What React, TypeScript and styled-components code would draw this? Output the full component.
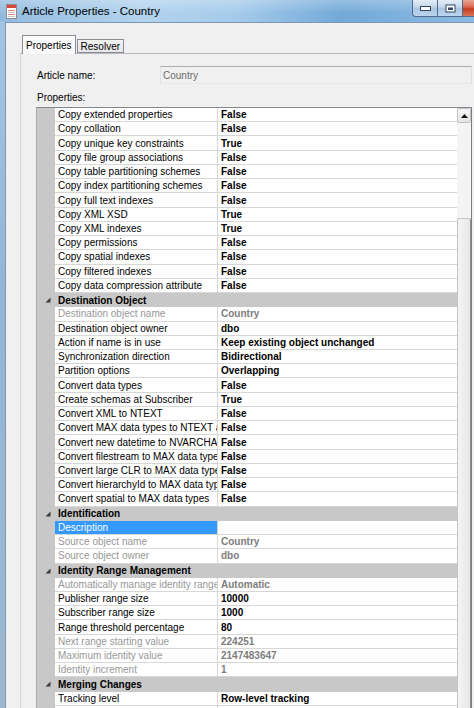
import styled, { createGlobalStyle } from "styled-components";

type GridRow =
  | { kind: "category"; label: string }
  | { kind: "prop"; label: string; value: string; readOnly?: boolean; selected?: boolean };

const prop = (
  label: string,
  value = "",
  extra: { readOnly?: boolean; selected?: boolean } = {}
): GridRow => ({ kind: "prop", label, value, ...extra });
const cat = (label: string): GridRow => ({ kind: "category", label });

const rows: GridRow[] = [
  prop("Copy extended properties", "False"),
  prop("Copy collation", "False"),
  prop("Copy unique key constraints", "True"),
  prop("Copy file group associations", "False"),
  prop("Copy table partitioning schemes", "False"),
  prop("Copy index partitioning schemes", "False"),
  prop("Copy full text indexes", "False"),
  prop("Copy XML XSD", "True"),
  prop("Copy XML indexes", "True"),
  prop("Copy permissions", "False"),
  prop("Copy spatial indexes", "False"),
  prop("Copy filtered indexes", "False"),
  prop("Copy data compression attribute", "False"),
  cat("Destination Object"),
  prop("Destination object name", "Country", { readOnly: true }),
  prop("Destination object owner", "dbo"),
  prop("Action if name is in use", "Keep existing object unchanged"),
  prop("Synchronization direction", "Bidirectional"),
  prop("Partition options", "Overlapping"),
  prop("Convert data types", "False"),
  prop("Create schemas at Subscriber", "True"),
  prop("Convert XML to NTEXT", "False"),
  prop("Convert MAX data types to NTEXT and IMAGE", "False"),
  prop("Convert new datetime to NVARCHAR", "False"),
  prop("Convert filestream to MAX data types", "False"),
  prop("Convert large CLR to MAX data types", "False"),
  prop("Convert hierarchyId to MAX data types", "False"),
  prop("Convert spatial to MAX data types", "False"),
  cat("Identification"),
  prop("Description", "", { selected: true }),
  prop("Source object name", "Country", { readOnly: true }),
  prop("Source object owner", "dbo", { readOnly: true }),
  cat("Identity Range Management"),
  prop("Automatically manage identity range", "Automatic", { readOnly: true }),
  prop("Publisher range size", "10000"),
  prop("Subscriber range size", "1000"),
  prop("Range threshold percentage", "80"),
  prop("Next range starting value", "224251", { readOnly: true }),
  prop("Maximum identity value", "2147483647", { readOnly: true }),
  prop("Identity increment", "1", { readOnly: true }),
  cat("Merging Changes"),
  prop("Tracking level", "Row-level tracking"),
  prop("", ""),
];

const LINE = "#d7d7d7";
const GUTTER = "#c8c8c8";

const GlobalStyle = createGlobalStyle`
  html, body {
    margin: 0;
    padding: 0;
    overflow: hidden;
    background: #f0f0f0;
  }
  body {
    font-family: "Liberation Sans", Arial, sans-serif;
  }
`;

const Window = styled.div`
  width: 474px;
  height: 708px;
  overflow: hidden;
  display: flex;
  flex-direction: column;
  background: #9dbfe0;
`;

const TitleBar = styled.div`
  height: 22px;
  flex-shrink: 0;
  display: flex;
  align-items: center;
  padding-left: 6px;
  background:
    linear-gradient(to bottom, rgba(255, 255, 255, 0.25), rgba(255, 255, 255, 0) 60%),
    linear-gradient(to right, #93bbe0 0%, #b3d3ee 30%, #a5cbeb 50%, #73a9d8 72%, #8bbae2 100%);
`;

const Title = styled.span`
  margin-left: 5px;
  font-size: 11.5px;
  color: #000;
  white-space: nowrap;
`;

const CaptionGroup = styled.div`
  margin-left: auto;
  align-self: flex-start;
  width: 62px;
  display: flex;
  overflow: hidden;
  flex-shrink: 0;
`;

const CaptionButton = styled.div<{ $w: number; $close?: boolean; $first?: boolean }>`
  width: ${(p) => p.$w}px;
  height: 17px;
  flex-shrink: 0;
  box-sizing: border-box;
  border: 1px solid #4f6b8e;
  border-top: none;
  border-left: ${(p) => (p.$first ? "1px solid #4f6b8e" : "none")};
  border-bottom-left-radius: ${(p) => (p.$first ? "4px" : "0")};
  display: flex;
  align-items: center;
  justify-content: center;
  background: ${(p) =>
    p.$close
      ? "linear-gradient(to bottom, #e9a898 0%, #d8664b 45%, #c33d1f 55%, #d6735a 100%)"
      : "linear-gradient(to bottom, #e3edf7 0%, #c3d7eb 45%, #a9c4df 50%, #bcd5ee 100%)"};
`;

const Frame = styled.div`
  flex: 1;
  display: flex;
  min-height: 0;
`;

const FrameEdge = styled.div`
  width: 5px;
  flex-shrink: 0;
  background: linear-gradient(to bottom, #a3c5e5 0%, #92b6d8 40%, #9db8d2 100%);
`;

const Client = styled.div`
  flex: 1;
  display: flex;
  flex-direction: column;
  background: #f0f0f0;
  border-left: 1px solid #7f97b2;
  border-top: 1px solid #7f97b2;
  padding-top: 12px;
  min-width: 0;
`;

const TabStrip = styled.div`
  display: flex;
  align-items: flex-end;
  height: 18px;
  padding-left: 16px;
`;

const Tab = styled.div<{ $active?: boolean }>`
  position: relative;
  z-index: ${(p) => (p.$active ? 1 : 0)};
  box-sizing: border-box;
  height: ${(p) => (p.$active ? 19 : 14)}px;
  margin-bottom: ${(p) => (p.$active ? -1 : 0)}px;
  margin-left: ${(p) => (p.$active ? 0 : 1)}px;
  padding: 0 3px;
  border: 1px solid #898c95;
  border-bottom: ${(p) => (p.$active ? "none" : "1px solid #898c95")};
  background: ${(p) =>
    p.$active ? "#fafafa" : "linear-gradient(to bottom, #f3f3f3, #e6e6e6)"};
  font-size: 10px;
  color: #000;
  display: flex;
  align-items: center;
  white-space: nowrap;
`;

const Panel = styled.div`
  margin-left: 14px;
  border-top: 1px solid #b6b9c0;
  border-left: 1px solid #d3d5da;
  padding: 12px 0 0 16px;
  flex: 1;
  display: flex;
  flex-direction: column;
`;

const FieldRow = styled.div`
  display: flex;
  align-items: center;
  height: 18px;
`;

const FieldLabel = styled.span`
  width: 123px;
  font-size: 10px;
  color: #000;
`;

const TextBox = styled.div`
  width: 312px;
  height: 18px;
  box-sizing: border-box;
  border: 1px solid;
  border-color: #abadb3 #dbdfe6 #e3e9ef #e2e3ea;
  background: #f0f0f0;
  color: #6d6d6d;
  font-size: 10px;
  padding-left: 2px;
  display: flex;
  align-items: center;
`;

const SectionLabel = styled.div`
  margin-top: 7px;
  line-height: 14px;
  font-size: 10px;
  color: #000;
`;

const Grid = styled.div`
  margin-top: 2px;
  margin-left: -1px;
  width: 436px;
  box-sizing: border-box;
  border-top: 1px solid #828790;
  border-left: 1px solid #a9abb0;
  border-right: 1px solid #7a7d84;
  display: flex;
  background: #fff;
`;

const RowList = styled.div`
  width: 420px;
  display: flex;
  flex-direction: column;
`;

const Row = styled.div<{ $category?: boolean }>`
  height: 14.238px;
  flex-shrink: 0;
  display: grid;
  grid-template-columns: 18px 163px 239px;
  background: ${(p) => (p.$category ? GUTTER : "#fff")};
  font-size: 10px;
`;

const Gutter = styled.div`
  background: ${GUTTER};
  display: flex;
  align-items: center;
  padding-left: 8px;
`;

const NameCell = styled.div<{ $readOnly?: boolean; $selected?: boolean }>`
  box-sizing: border-box;
  border-right: 1px solid ${LINE};
  border-bottom: 1px solid ${LINE};
  padding-left: 3px;
  overflow: hidden;
  white-space: nowrap;
  display: flex;
  align-items: center;
  background: ${(p) => (p.$selected ? "#3399ff" : "#fff")};
  color: ${(p) => (p.$selected ? "#fff" : p.$readOnly ? "#989898" : "#000")};
`;

const ValueCell = styled.div<{ $readOnly?: boolean }>`
  box-sizing: border-box;
  border-bottom: 1px solid ${LINE};
  padding-left: 3px;
  overflow: hidden;
  white-space: nowrap;
  display: flex;
  align-items: center;
  font-weight: bold;
  color: ${(p) => (p.$readOnly ? "#7d7d7d" : "#000")};
`;

const CategoryLabel = styled.div`
  grid-column: 2 / 4;
  padding-left: 3px;
  display: flex;
  align-items: center;
  font-weight: bold;
  color: #000;
  white-space: nowrap;
`;

const ScrollBar = styled.div`
  width: 14px;
  display: flex;
  flex-direction: column;
  background: #f4f4f4;
`;

const ScrollArrow = styled.div`
  height: 15px;
  flex-shrink: 0;
  box-sizing: border-box;
  border: 1px solid #c2c2c2;
  border-radius: 2px;
  background: linear-gradient(to bottom, #f7f7f7, #e4e4e4);
  display: flex;
  align-items: center;
  justify-content: center;
`;

const ScrollThumb = styled.div`
  margin-top: 95px;
  flex: 1;
  box-sizing: border-box;
  border: 1px solid #c4c4c4;
  border-right-color: #8c8c8c;
  border-radius: 2px;
  background: linear-gradient(to right, #f5f5f5, #e6e6e6);
`;

function AppIcon() {
  return (
    <svg width="11" height="15" viewBox="0 0 11 15">
      <rect x="0.5" y="0.5" width="10" height="14" fill="#fff" stroke="#8c8c8c" />
      <rect x="1" y="1" width="9" height="3" fill="#d9463a" />
      <line x1="2" y1="6.5" x2="9" y2="6.5" stroke="#e08a80" />
      <line x1="2" y1="8.5" x2="9" y2="8.5" stroke="#c8c8c8" />
      <line x1="2" y1="10.5" x2="9" y2="10.5" stroke="#e08a80" />
      <line x1="2" y1="12.5" x2="9" y2="12.5" stroke="#c8c8c8" />
    </svg>
  );
}

function ExpandGlyph() {
  return (
    <svg width="6" height="6" viewBox="0 0 6 6">
      <polygon points="5.5,0.5 5.5,5.5 0.5,5.5" fill="#3c3c3c" />
    </svg>
  );
}

export default function App() {
  return (
    <>
      <GlobalStyle />
      <Window>
        <TitleBar>
          <AppIcon />
          <Title>Article Properties - Country</Title>
          <CaptionGroup>
            <CaptionButton $w={26} $first>
              <svg width="11" height="5" viewBox="0 0 11 5">
                <rect x="0.5" y="0.5" width="10" height="4" fill="#fff" stroke="#33485f" />
              </svg>
            </CaptionButton>
            <CaptionButton $w={25}>
              <svg width="11" height="9" viewBox="0 0 11 9">
                <rect x="0.5" y="0.5" width="10" height="8" fill="#33485f" />
                <rect x="1.5" y="1.5" width="8" height="6" fill="#fff" />
                <rect x="3" y="3.5" width="5" height="2.5" fill="#33485f" />
              </svg>
            </CaptionButton>
            <CaptionButton $w={44} $close />
          </CaptionGroup>
        </TitleBar>
        <Frame>
          <FrameEdge />
          <Client>
            <TabStrip>
              <Tab $active>Properties</Tab>
              <Tab>Resolver</Tab>
            </TabStrip>
            <Panel>
              <FieldRow>
                <FieldLabel>Article name:</FieldLabel>
                <TextBox>Country</TextBox>
              </FieldRow>
              <SectionLabel>Properties:</SectionLabel>
              <Grid>
                <RowList>
                  {rows.map((row, i) =>
                    row.kind === "category" ? (
                      <Row key={i} $category>
                        <Gutter>
                          <ExpandGlyph />
                        </Gutter>
                        <CategoryLabel>{row.label}</CategoryLabel>
                      </Row>
                    ) : (
                      <Row key={i}>
                        <Gutter />
                        <NameCell $readOnly={row.readOnly} $selected={row.selected}>
                          {row.label}
                        </NameCell>
                        <ValueCell $readOnly={row.readOnly}>{row.value}</ValueCell>
                      </Row>
                    )
                  )}
                </RowList>
                <ScrollBar>
                  <ScrollArrow>
                    <svg width="7" height="4" viewBox="0 0 7 4">
                      <polygon points="3.5,0 7,4 0,4" fill="#111" />
                    </svg>
                  </ScrollArrow>
                  <ScrollThumb />
                </ScrollBar>
              </Grid>
            </Panel>
          </Client>
        </Frame>
      </Window>
    </>
  );
}
